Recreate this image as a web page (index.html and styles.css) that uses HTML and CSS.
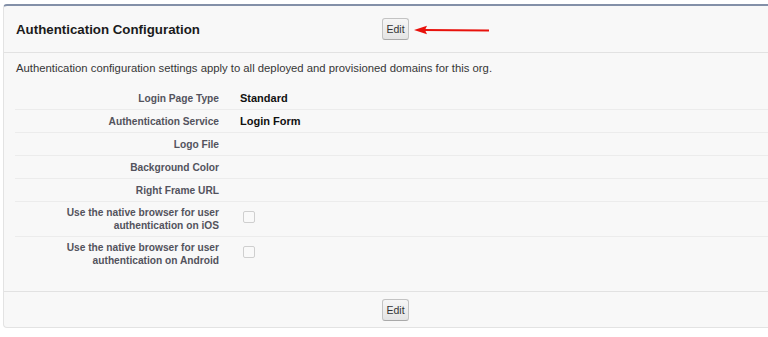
FILE: index.html
```html
<!DOCTYPE html>
<html>
<head>
<meta charset="utf-8">
<link rel="stylesheet" href="styles.css">
</head>
<body>
<div class="panel">
  <div class="head">
    <h2 class="title">Authentication Configuration</h2>
    <div class="btns">
      <button class="btn">Edit</button>
      <svg class="arrow" width="76" height="10" viewBox="0 0 76 10"><line x1="9" y1="5" x2="75" y2="5.6" stroke="#e8120c" stroke-width="2"/><polygon points="0,5 13,0.8 11,5 13,9.2" fill="#e8120c"/></svg>
    </div>
  </div>
  <div class="body">
    <p class="desc">Authentication configuration settings apply to all deployed and provisioned domains for this org.</p>
    <div class="detail">
      <div class="row"><div class="label">Login Page Type</div><div class="value">Standard</div></div>
      <div class="row"><div class="label">Authentication Service</div><div class="value">Login Form</div></div>
      <div class="row"><div class="label">Logo File</div><div class="value"></div></div>
      <div class="row"><div class="label">Background Color</div><div class="value"></div></div>
      <div class="row"><div class="label">Right Frame URL</div><div class="value"></div></div>
      <div class="row tall"><div class="label">Use the native browser for user authentication on iOS</div><div class="value"><span class="check"></span></div></div>
      <div class="row tall last"><div class="label">Use the native browser for user authentication on Android</div><div class="value"><span class="check"></span></div></div>
    </div>
  </div>
  <div class="foot">
    <button class="btn">Edit</button>
  </div>
</div>
</body>
</html>
```

FILE: styles.css
```css
html, body {
  margin: 0;
  padding: 0;
  background: #ffffff;
  overflow: hidden;
  font-family: "Liberation Sans", Arial, sans-serif;
}

.panel {
  margin: 4px -12px 0 3px;
  background: #f8f8f8;
  border-top: 2px solid #8390a8;
  border-left: 1px solid #e3e3e3;
  border-bottom: 1px solid #e3e3e3;
  border-radius: 4px;
}

.head {
  display: grid;
  grid-template-columns: 378px auto;
  align-items: center;
  height: 46px;
  border-bottom: 1px solid #e2e2e2;
}

.title {
  margin: 0;
  padding-left: 12px;
  font-size: 13.3px;
  font-weight: bold;
  color: #1b1b1b;
}

.btns {
  display: flex;
  align-items: center;
}

.arrow {
  margin-left: 5px;
  margin-top: 1px;
}

.btn {
  font-family: "Liberation Sans", Arial, sans-serif;
  font-size: 10.5px;
  color: #333;
  height: 22px;
  width: 27px;
  padding: 0;
  border: 1px solid #c3c3c3;
  border-bottom-color: #a9a9a9;
  border-radius: 3px;
  background: linear-gradient(#f6f6f6, #e4e4e4);
}

.body {
  padding: 8px 0 20px 11px;
}

.desc {
  margin: 0 0 12px 1px;
  font-size: 11.3px;
  line-height: 14px;
  color: #363636;
}

.row {
  display: grid;
  grid-template-columns: 204px 1fr;
  column-gap: 21px;
  border-bottom: 1px solid #ececec;
  min-height: 22px;
}

.row.last {
  border-bottom: none;
}

.label {
  padding: 5px 0 4px 44px;
  text-align: right;
  font-size: 10.2px;
  line-height: 13px;
  font-weight: bold;
  color: #53535d;
}

.value {
  padding: 5px 0 4px 0;
  font-size: 11px;
  line-height: 13px;
  font-weight: bold;
  color: #111;
}

.row.tall .label {
  padding-top: 4px;
  padding-bottom: 4px;
}

.row.tall .value {
  padding-top: 4px;
}

.check {
  display: block;
  width: 10px;
  height: 10px;
  margin: 5px 0 0 3px;
  border: 1px solid #cfcfcf;
  border-radius: 2px;
  background: #f9f9f9;
}

.foot {
  border-top: 1px solid #e2e2e2;
  height: 35px;
  display: grid;
  grid-template-columns: 378px auto;
  align-items: center;
}

.foot .btn {
  grid-column: 2;
}
```
